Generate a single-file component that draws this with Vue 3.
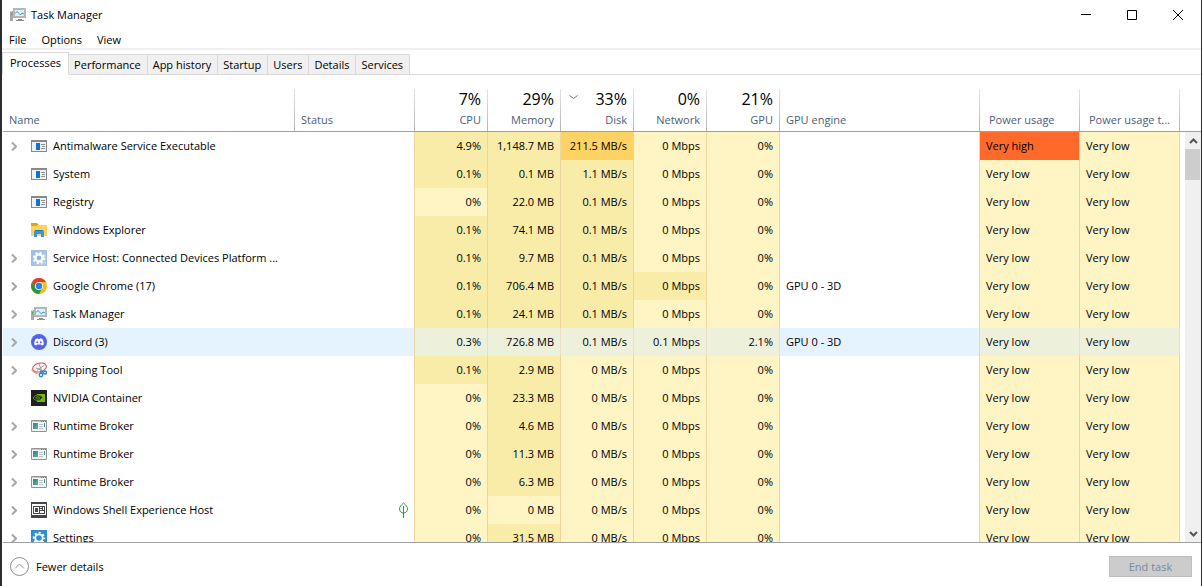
<template>
  <div class="window">
    <svg class="sprite" aria-hidden="true">
      <defs>
        <linearGradient id="grad-page" x1="0" y1="0" x2="1" y2="1">
          <stop offset="0" stop-color="#2f78b4" />
          <stop offset="1" stop-color="#5fb487" />
        </linearGradient>
        <linearGradient id="grad-service" x1="0" y1="0" x2="1" y2="1">
          <stop offset="0" stop-color="#94b9e2" />
          <stop offset="1" stop-color="#b9d3ee" />
        </linearGradient>
      </defs>
      <symbol id="icon-taskmgr" viewBox="0 0 16 16">
        <path d="M0 4h3v10H0z" fill="#a8a8a8" />
        <path d="M0 4h2v1H0z" fill="#d8d8d8" />
        <path d="M1 6h1v2H1z" fill="#3fc13a" />
        <path d="M4 2h11v8H4z" fill="#dff2fc" stroke="#b4b8ba" stroke-width="2" />
        <path d="M8 12h4v1h2v1H6v-1h2z" fill="#8c8c8c" />
        <path d="M5 6.500l2-2 2 2 1.500 1.500L12 6l2 1" fill="none" stroke="#2a9bd6" />
      </symbol>
      <symbol id="icon-app" viewBox="0 0 16 16">
        <path d="M0 2h16v12H0z" fill="#868a8d" />
        <path d="M1 4h14v9H1z" fill="#f1f1f1" />
        <path d="M5 5h4v7H5z" fill="#0a74d4" />
        <path d="M10 6h4v1h-4zM11 8h3v1h-3zM10 10h4v1h-4z" fill="#8d9194" />
      </symbol>
      <symbol id="icon-explorer" viewBox="0 0 16 16">
        <path d="M0 1h6l2 2v3H0z" fill="#e3a21a" />
        <path d="M0 4h6l1-1h9v11H0z" fill="#ffd25e" />
        <path d="M3 15V9.500L4.500 8h7L13 9.500V15h-3v-3H6v3z" fill="#3695df" />
        <path d="M4 8h8v1H4z" fill="#2278c0" />
      </symbol>
      <symbol id="icon-service" viewBox="0 0 16 16">
        <path d="M0 0h16v16H0z" fill="url(#grad-service)" />
        <path d="M.5.5h15v15H.5z" fill="none" stroke="#a7bfda" />
        <circle cx="8" cy="8" r="5.200" fill="none" stroke="#fff" stroke-width="2" stroke-dasharray="2.040 2.040" />
        <circle cx="8" cy="8" r="3.500" fill="none" stroke="#fff" stroke-width="2.400" />
        <circle cx="8" cy="8" r="2.300" fill="#8db6e2" />
      </symbol>
      <symbol id="icon-chrome" viewBox="0 0 16 16">
        <circle cx="8" cy="8" r="8" fill="#fbbc14" />
        <path d="M8 4h6.930A8 8 0 0 0 1.070 4l3.500 6z" fill="#e33b2e" />
        <path d="M1.070 4A8 8 0 0 0 8 16l3.460-6H4.540z" fill="#249a48" />
        <circle cx="8" cy="8" r="4" fill="#fff" />
        <circle cx="8" cy="8" r="3.200" fill="#2c7df0" />
      </symbol>
      <symbol id="icon-discord" viewBox="0 0 16 16">
        <circle cx="8" cy="8" r="8" fill="#5462ee" />
        <path d="M4.700 4.900l2-.7.5.7h1.600l.5-.7 2 .7c1.200 1.800 1.600 3.600 1.500 5.600-.8.600-1.500.9-2.200 1.100l-.7-1H6.100l-.7 1c-.7-.2-1.400-.5-2.200-1.100-.1-2 .3-3.800 1.500-5.600z" fill="#fff" />
        <circle cx="6.200" cy="8.200" r="1" fill="#5462ee" />
        <circle cx="9.800" cy="8.200" r="1" fill="#5462ee" />
      </symbol>
      <symbol id="icon-snip" viewBox="0 0 16 16">
        <ellipse cx="8.500" cy="5.500" rx="7" ry="4.300" transform="rotate(-15 8.500 5.500)" fill="#f4f4f4" stroke="#e0504c" />
        <path d="M1 7.500c0 2.500 3 4 6.500 3.500" fill="none" stroke="#e87873" />
        <path d="M8 2l3 7M13.500 3L6 8.500M5 6l5 2" fill="none" stroke="#9b9fa3" />
        <circle cx="10" cy="13" r="1.700" fill="none" stroke="#2b87c8" stroke-width="1.400" />
        <circle cx="14" cy="10.500" r="1.500" fill="none" stroke="#2b87c8" stroke-width="1.400" />
        <path d="M10 11V8.500M12.500 10L9 9" stroke="#2b87c8" stroke-width="1.400" />
      </symbol>
      <symbol id="icon-nvidia" viewBox="0 0 16 16">
        <path d="M0 0h16v16H0z" fill="#1f2120" />
        <path d="M6 4h8v8H6z" fill="#76b900" />
        <path d="M2 8c2-3.500 6.500-4 9.500-.5C9 11.500 4.500 11.500 2 8z" fill="#1f2120" stroke="#5f9410" />
        <path d="M4.500 8c1-1.700 3.200-2 4.500-.2-1.200 1.800-3 2-4.500.2z" fill="#35520c" stroke="#5f9410" stroke-width=".8" />
      </symbol>
      <symbol id="icon-broker" viewBox="0 0 16 16">
        <path d="M.5 2.500h15v11H.5z" fill="#f4f4f4" stroke="#8f9499" />
        <path d="M1 3h14v1H1z" fill="#c3c9ce" />
        <path d="M10 3h1v1h-1zM12 3h1v1h-1zM14 3h1v1h-1z" fill="#4d7f9e" />
        <path d="M2 5h5v6H2z" fill="url(#grad-page)" />
        <path d="M8 6h4v1H8zM8 8h4v1H8zM8 10h4v1H8z" fill="#c4c4c4" />
        <path d="M13 5h1v4h-1z" fill="#3b9a9c" />
      </symbol>
      <symbol id="icon-shell" viewBox="0 0 16 16">
        <path d="M0 0h16v16H0z" fill="#454545" />
        <path d="M1 2h14v1H1z" fill="#fff" />
        <path d="M1 3h14v10H1z" fill="#fff" />
        <path d="M2 4h12v8H2z" fill="#454545" />
        <path d="M3 5h5v6H3z" fill="#fff" />
        <path d="M4 6h3v4H4z" fill="#454545" />
        <path d="M9 5h2v1H9zM12 5h1v3h-1zM9 7h2v1H9zM9 9h4v2H9z" fill="#fff" />
      </symbol>
      <symbol id="icon-settings" viewBox="0 0 16 16">
        <path d="M0 0h16v16H0z" fill="#2c90d0" />
        <circle cx="8" cy="8" r="3.700" fill="none" stroke="#fff" stroke-width="1.800" />
        <circle cx="8" cy="8" r="5.300" fill="none" stroke="#fff" stroke-width="1.800" stroke-dasharray="2.080 2.080" stroke-dashoffset="1" />
      </symbol>
    </svg>

    <header class="title-bar">
      <svg class="icon"><use href="#icon-taskmgr" /></svg>
      <h1>Task Manager</h1>
      <div class="window-controls">
        <button aria-label="Minimize">
          <svg width="10" height="10"><path d="M0 4.500h10" /></svg>
        </button>
        <button aria-label="Maximize">
          <svg width="10" height="10"><path d="M.5.5h9v9h-9z" /></svg>
        </button>
        <button aria-label="Close">
          <svg width="10" height="10"><path d="M0 0l10 10M10 0L0 10" /></svg>
        </button>
      </div>
    </header>

    <nav class="menu-bar">
      <button v-for="menu in menus" :key="menu">{{ menu }}</button>
    </nav>

    <div class="tabs" role="tablist">
      <button
        v-for="tab in tabs"
        :key="tab"
        role="tab"
        :aria-selected="tab === activeTab"
        :class="{ active: tab === activeTab }"
        @click="activeTab = tab"
      >{{ tab }}</button>
    </div>

    <main class="content">
      <div class="table-wrap">
        <table>
          <colgroup>
            <col />
            <col class="col-status" />
            <col v-for="col in usageCols" :key="col.key" class="col-usage" />
            <col class="col-engine" />
            <col class="col-power" />
            <col class="col-power" />
          </colgroup>
          <thead>
            <tr>
              <th>Name</th>
              <th>Status</th>
              <th v-for="col in usageCols" :key="col.key" class="num">
                <div class="total">
                  <svg v-if="col.key === sortKey" class="sort" width="9" height="5">
                    <path d="M.5.5l4 3 4-3" />
                  </svg>
                  <span>{{ col.total }}</span>
                </div>
                {{ col.label }}
              </th>
              <th>GPU engine</th>
              <th class="power">Power usage</th>
              <th class="power">Power usage t...</th>
            </tr>
          </thead>
          <tbody>
            <tr
              v-for="(p, i) in processes"
              :key="i"
              :class="{ selected: i === selected }"
              @click="selected = i"
            >
              <td class="name">
                <div class="name-cell">
                  <button v-if="p.group" class="expand" :aria-label="'Expand ' + p.name">
                    <svg width="6" height="9"><path d="M1 .5l4 4-4 4" /></svg>
                  </button>
                  <span v-else class="expand"></span>
                  <svg class="icon"><use :href="'#icon-' + p.icon" /></svg>
                  <span>{{ p.name }}</span>
                </div>
              </td>
              <td class="status">
                <svg v-if="p.suspended" class="leaf" width="11" height="16">
                  <path d="M5.500 1C3 3 1.500 5 1.500 7c0 2.500 2 4 4 4s4-1.500 4-4c0-2-1.500-4-4-6zM5.500 4v12" />
                </svg>
              </td>
              <td
                v-for="(col, c) in usageCols"
                :key="col.key"
                class="num"
                :class="'heat-' + p.heat[c]"
              >{{ p.usage[c] }}</td>
              <td>{{ p.engine }}</td>
              <td :class="p.power === 'Very high' ? 'heat-4' : 'heat-1'">{{ p.power || 'Very low' }}</td>
              <td class="heat-1">Very low</td>
            </tr>
          </tbody>
        </table>
      </div>
      <div class="scroll-side">
        <div class="scroll-head"></div>
        <div class="scrollbar">
          <button aria-label="Scroll up">
            <svg width="9" height="6"><path d="M1 5l3.500-3.500L8 5" /></svg>
          </button>
          <div class="thumb"></div>
          <button aria-label="Scroll down">
            <svg width="9" height="6"><path d="M1 1l3.500 3.500L8 1" /></svg>
          </button>
        </div>
      </div>
    </main>

    <footer class="footer">
      <button class="fewer">
        <svg width="19" height="19">
          <circle cx="9.500" cy="9.500" r="9" />
          <path d="M5 11.500L9.500 7l4.500 4.500" />
        </svg>
        Fewer details
      </button>
      <button class="end-task" disabled>End task</button>
    </footer>
  </div>
</template>

<script setup>
import { ref } from 'vue'

const menus = ['File', 'Options', 'View']
const tabs = ['Processes', 'Performance', 'App history', 'Startup', 'Users', 'Details', 'Services']
const activeTab = ref('Processes')
const sortKey = ref('disk')
const selected = ref(7)

const usageCols = [
  { key: 'cpu', label: 'CPU', total: '7%' },
  { key: 'memory', label: 'Memory', total: '29%' },
  { key: 'disk', label: 'Disk', total: '33%' },
  { key: 'network', label: 'Network', total: '0%' },
  { key: 'gpu', label: 'GPU', total: '21%' }
]

// usage and heat follow the order of usageCols
const processes = [
  { name: 'Antimalware Service Executable', icon: 'app', group: true, usage: ['4.9%', '1,148.7 MB', '211.5 MB/s', '0 Mbps', '0%'], heat: [2, 2, 3, 1, 1], power: 'Very high' },
  { name: 'System', icon: 'app', usage: ['0.1%', '0.1 MB', '1.1 MB/s', '0 Mbps', '0%'], heat: [2, 2, 2, 1, 1] },
  { name: 'Registry', icon: 'app', usage: ['0%', '22.0 MB', '0.1 MB/s', '0 Mbps', '0%'], heat: [1, 2, 2, 1, 1] },
  { name: 'Windows Explorer', icon: 'explorer', usage: ['0.1%', '74.1 MB', '0.1 MB/s', '0 Mbps', '0%'], heat: [2, 2, 2, 1, 1] },
  { name: 'Service Host: Connected Devices Platform ...', icon: 'service', group: true, usage: ['0.1%', '9.7 MB', '0.1 MB/s', '0 Mbps', '0%'], heat: [2, 2, 2, 1, 1] },
  { name: 'Google Chrome (17)', icon: 'chrome', group: true, usage: ['0.1%', '706.4 MB', '0.1 MB/s', '0 Mbps', '0%'], heat: [2, 2, 2, 2, 1], engine: 'GPU 0 - 3D' },
  { name: 'Task Manager', icon: 'taskmgr', group: true, usage: ['0.1%', '24.1 MB', '0.1 MB/s', '0 Mbps', '0%'], heat: [2, 2, 2, 1, 1] },
  { name: 'Discord (3)', icon: 'discord', group: true, usage: ['0.3%', '726.8 MB', '0.1 MB/s', '0.1 Mbps', '2.1%'], heat: [2, 2, 2, 2, 2], engine: 'GPU 0 - 3D' },
  { name: 'Snipping Tool', icon: 'snip', group: true, usage: ['0.1%', '2.9 MB', '0 MB/s', '0 Mbps', '0%'], heat: [2, 2, 1, 1, 1] },
  { name: 'NVIDIA Container', icon: 'nvidia', usage: ['0%', '23.3 MB', '0 MB/s', '0 Mbps', '0%'], heat: [1, 2, 1, 1, 1] },
  { name: 'Runtime Broker', icon: 'broker', group: true, usage: ['0%', '4.6 MB', '0 MB/s', '0 Mbps', '0%'], heat: [1, 2, 1, 1, 1] },
  { name: 'Runtime Broker', icon: 'broker', group: true, usage: ['0%', '11.3 MB', '0 MB/s', '0 Mbps', '0%'], heat: [1, 2, 1, 1, 1] },
  { name: 'Runtime Broker', icon: 'broker', group: true, usage: ['0%', '6.3 MB', '0 MB/s', '0 Mbps', '0%'], heat: [1, 2, 1, 1, 1] },
  { name: 'Windows Shell Experience Host', icon: 'shell', group: true, suspended: true, usage: ['0%', '0 MB', '0 MB/s', '0 Mbps', '0%'], heat: [1, 1, 1, 1, 1] },
  { name: 'Settings', icon: 'settings', group: true, usage: ['0%', '31.5 MB', '0 MB/s', '0 Mbps', '0%'], heat: [1, 2, 1, 1, 1] }
]
</script>

<style>
body {
  overflow: hidden;
}
</style>

<style scoped>
.window {
  display: flex;
  flex-direction: column;
  height: 100vh;
  box-sizing: border-box;
  border-left: 2px solid #2b2c30;
  border-right: 1px solid #2b2c30;
  background: #fff;
  color: #000;
  font: 11px/16px "Open Sans", sans-serif;
}

.sprite {
  position: absolute;
  width: 0;
  height: 0;
}

button {
  margin: 0;
  padding: 0;
  border: none;
  background: none;
  color: inherit;
  font: inherit;
}

.icon {
  width: 16px;
  height: 16px;
  flex: none;
}

.title-bar {
  display: flex;
  align-items: center;
  height: 29px;
  padding-left: 8px;
  flex: none;
}

.title-bar h1 {
  margin: 0 0 0 5px;
  font-size: 11px;
  font-weight: 400;
}

.window-controls {
  display: flex;
  margin-left: auto;
}

.window-controls button {
  display: flex;
  align-items: center;
  justify-content: center;
  width: 46px;
  height: 28px;
}

.window-controls path {
  fill: none;
  stroke: #000;
}

.menu-bar {
  display: flex;
  gap: 15px;
  padding: 3px 7px 0;
  border-bottom: 2px solid #f0f0f0;
  flex: none;
}

.tabs {
  display: flex;
  align-items: flex-end;
  height: 25px;
  flex: none;
  box-shadow: inset 0 -1px #d9d9d9;
}

.tabs button {
  height: 21px;
  padding: 0 6px 0 5px;
  border: 1px solid #d9d9d9;
  border-left: none;
  background: #f0f0f0;
}

.tabs button.active {
  height: 23px;
  padding: 0 7px 2px;
  border-left: 1px solid #d9d9d9;
  border-bottom-color: #fff;
  background: #fff;
}

.content {
  display: flex;
  flex: 1;
  min-height: 0;
  padding: 14px 0 0 1px;
}

.table-wrap {
  flex: 1;
  min-width: 0;
  overflow: hidden;
}

table {
  width: 100%;
  table-layout: fixed;
  border-collapse: separate;
  border-spacing: 0;
}

.col-status {
  width: 120px;
}

.col-usage {
  width: 73px;
}

.col-engine {
  width: 200px;
}

.col-power {
  width: 100px;
}

th {
  box-sizing: border-box;
  height: 43px;
  padding: 0 7px 3px 6px;
  border-bottom: 1px solid #a0a0a0;
  background: linear-gradient(#e5e5e5, #b4b4b4) right / 1px 100% no-repeat;
  vertical-align: bottom;
  text-align: left;
  font-weight: 400;
  color: #4c607a;
  white-space: nowrap;
}

th.power {
  padding-right: 2px;
  padding-left: 9px;
}

th.num {
  text-align: right;
}

.total {
  display: flex;
  justify-content: flex-end;
  margin-bottom: 3px;
  color: #000;
  font-size: 16px;
  line-height: 20px;
}

.sort {
  margin: 6px auto 0 2px;
  fill: none;
  stroke: #5f7a94;
}

td {
  height: 28px;
  padding: 0 6px;
  border-right: 1px solid #ecd7a0;
  white-space: nowrap;
}

td.name {
  padding: 0;
  border-right-color: transparent;
}

.num {
  text-align: right;
}

.name-cell {
  display: flex;
  align-items: center;
}

.name-cell .icon {
  margin-right: 6px;
}

.expand {
  display: flex;
  align-items: center;
  flex: none;
  box-sizing: border-box;
  width: 28px;
  height: 16px;
  padding-left: 8px;
}

.expand path {
  fill: none;
  stroke: #a6a6a6;
  stroke-width: 2;
}

.status svg {
  display: block;
  margin-left: auto;
  margin-right: -1px;
}

.leaf path {
  fill: none;
  stroke: #2f9a4c;
}

.heat-1 {
  background: #fff4c4;
}

.heat-2 {
  background: #f9eca8;
}

.heat-3 {
  background: #ffd264;
}

.heat-4 {
  background: #ff6a2b;
}

.selected td {
  background: #e5f3ff;
}

.selected td[class*='heat'] {
  border-right-color: #e8dfc9;
  background: #edf1dc;
}

.scroll-side {
  display: flex;
  flex-direction: column;
  width: 21px;
}

.scroll-head {
  height: 42px;
  border-bottom: 1px solid #a0a0a0;
}

.scrollbar {
  display: flex;
  flex-direction: column;
  flex: 1;
  margin-left: 5px;
  background: #f0f0f0;
}

.scrollbar button {
  display: flex;
  align-items: center;
  justify-content: center;
  height: 17px;
}

.scrollbar button:last-child {
  margin-top: auto;
}

.scrollbar path {
  fill: none;
  stroke: #555;
  stroke-width: 2;
}

.thumb {
  height: 31px;
  margin-right: 1px;
  background: #cdcdcd;
}

.footer {
  display: flex;
  align-items: center;
  justify-content: space-between;
  box-sizing: border-box;
  height: 44px;
  margin-left: 1px;
  padding: 4px 9px 0 7px;
  border-top: 1px solid #a0a0a0;
  flex: none;
}

.fewer {
  display: flex;
  align-items: center;
  gap: 7px;
}

.fewer svg {
  fill: none;
  stroke: #8f8f8f;
}

.end-task {
  width: 83px;
  height: 21px;
  border: 1px solid #bfbfbf;
  background: #ccc;
  color: #7c8799;
}
</style>
